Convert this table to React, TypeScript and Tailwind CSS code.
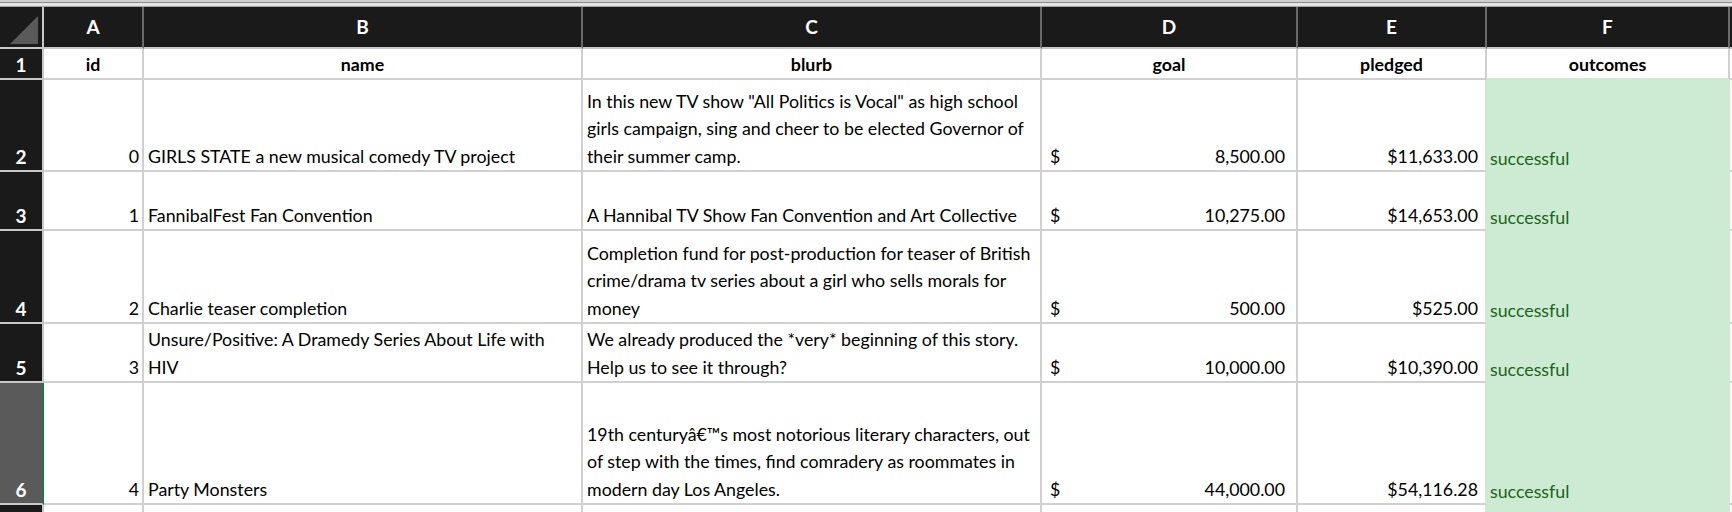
import React from 'react'

type Row = {
  n: number
  h: string
  id: string
  name: string[]
  blurb: string[]
  goal: string
  pledged: string
  selected?: boolean
}

const rows: Row[] = [
  {
    n: 2,
    h: 'h-[92px]',
    id: '0',
    name: ['GIRLS STATE a new musical comedy TV project'],
    blurb: [
      'In this new TV show "All Politics is Vocal" as high school',
      'girls campaign, sing and cheer to be elected Governor of',
      'their summer camp.',
    ],
    goal: '8,500.00',
    pledged: '$11,633.00',
  },
  {
    n: 3,
    h: 'h-[59px]',
    id: '1',
    name: ['FannibalFest Fan Convention'],
    blurb: ['A Hannibal TV Show Fan Convention and Art Collective'],
    goal: '10,275.00',
    pledged: '$14,653.00',
  },
  {
    n: 4,
    h: 'h-[93px]',
    id: '2',
    name: ['Charlie teaser completion'],
    blurb: [
      'Completion fund for post-production for teaser of British',
      'crime/drama tv series about a girl who sells morals for',
      'money',
    ],
    goal: '500.00',
    pledged: '$525.00',
  },
  {
    n: 5,
    h: 'h-[59px]',
    id: '3',
    name: ['Unsure/Positive: A Dramedy Series About Life with', 'HIV'],
    blurb: ['We already produced the *very* beginning of this story.', 'Help us to see it through?'],
    goal: '10,000.00',
    pledged: '$10,390.00',
  },
  {
    n: 6,
    h: 'h-[122px]',
    id: '4',
    name: ['Party Monsters'],
    blurb: [
      '19th centuryâ€™s most notorious literary characters, out',
      'of step with the times, find comradery as roommates in',
      'modern day Los Angeles.',
    ],
    goal: '44,000.00',
    pledged: '$54,116.28',
    selected: true,
  },
]

const cols = [
  { l: 'A', w: 'w-[100px]', label: 'id' },
  { l: 'B', w: 'w-[439px]', label: 'name' },
  { l: 'C', w: 'w-[459px]', label: 'blurb' },
  { l: 'D', w: 'w-[256px]', label: 'goal' },
  { l: 'E', w: 'w-[189px]', label: 'pledged' },
  { l: 'F', w: 'w-[243px]', label: 'outcomes' },
]

function Lines({ lines }: { lines: string[] }) {
  return (
    <div className="whitespace-nowrap">
      {lines.map((t, i) => (
        <div key={i}>{t}</div>
      ))}
    </div>
  )
}

function RowHead({ n, selected }: { n?: number; selected?: boolean }) {
  return (
    <div
      className={
        'w-[44px] shrink-0 flex items-end justify-center border-b-2 border-r-2 border-b-[#c8c8c8] text-[19px] font-bold text-white ' +
        (selected ? 'bg-[#5a5a5a] border-r-[#217346]' : 'bg-[#1a1a1a] border-r-[#c8c8c8]')
      }
    >
      {n}
    </div>
  )
}

export default function App() {
  return (
    <div
      className="w-[1732px] h-[512px] overflow-hidden bg-white text-[17.8px] leading-[27.5px] text-black"
      style={{ fontFamily: 'Lato, "Open Sans", sans-serif' }}
    >
      {/* window chrome strip */}
      <div className="h-[2px] bg-[#d0d0d0]" />
      <div className="h-[1px] bg-[#8c8c8c]" />
      <div className="h-[3px] bg-[#e4e4e4]" />
      <div className="h-[1px] bg-[#a0a0a0]" />

      {/* column letters */}
      <div className="flex h-[42px] bg-[#1a1a1a] text-white text-[19px] font-bold">
        <div className="relative w-[44px] shrink-0 border-b-2 border-r-2 border-[#c8c8c8]">
          <svg className="absolute left-[10px] top-[9px]" width="28" height="28" viewBox="0 0 28 28">
            <polygon points="0,28 28,28 28,0" fill="#5a5a5a" />
          </svg>
        </div>
        {cols.map((c) => (
          <div
            key={c.l}
            className={`${c.w} shrink-0 flex items-center justify-center border-b-2 border-r-2 border-b-[#c8c8c8] border-r-[#6a6a6a]`}
          >
            {c.l}
          </div>
        ))}
        <div className="flex-1 border-b-2 border-[#c8c8c8]" />
      </div>

      {/* header labels */}
      <div className="flex h-[31px]">
        <RowHead n={1} />
        {cols.map((c) => (
          <div
            key={c.l}
            className={
              `${c.w} shrink-0 flex items-end justify-center font-bold border-b-2 border-r-2 ` +
              (c.l === 'F' ? 'border-b-[#cdebd3] border-r-[#d0d0d0]' : 'border-[#d0d0d0]')
            }
          >
            {c.label}
          </div>
        ))}
        <div className="flex-1 border-b-2 border-[#d0d0d0]" />
      </div>

      {rows.map((r) => (
        <div key={r.n} className={`flex ${r.h}`}>
          <RowHead n={r.n} selected={r.selected} />
          <div className="w-[100px] shrink-0 flex items-end justify-end pr-[3px] border-b-2 border-r-2 border-[#d0d0d0]">
            {r.id}
          </div>
          <div className="w-[439px] shrink-0 flex items-end pl-[4px] border-b-2 border-r-2 border-[#d0d0d0]">
            <Lines lines={r.name} />
          </div>
          <div className="w-[459px] shrink-0 flex items-end pl-[4px] border-b-2 border-r-2 border-[#d0d0d0]">
            <Lines lines={r.blurb} />
          </div>
          <div className="w-[256px] shrink-0 flex items-end justify-between pl-[8px] pr-[11px] border-b-2 border-r-2 border-[#d0d0d0]">
            <span>$</span>
            <span>{r.goal}</span>
          </div>
          <div className="w-[189px] shrink-0 flex items-end justify-end pr-[7px] border-b-2 border-r-2 border-b-[#d0d0d0] border-r-[#cdebd3]">
            {r.pledged}
          </div>
          <div className="w-[243px] shrink-0 flex items-end pl-[3px] bg-[#cdebd3] text-[#1b6419]">successful</div>
          <div className="flex-1 border-b-2 border-[#d0d0d0]" />
        </div>
      ))}

      {/* next row, cut off */}
      <div className="flex h-[30px]">
        <RowHead />
        <div className="w-[100px] shrink-0 border-r-2 border-[#d0d0d0]" />
        <div className="w-[439px] shrink-0 border-r-2 border-[#d0d0d0]" />
        <div className="w-[459px] shrink-0 border-r-2 border-[#d0d0d0]" />
        <div className="w-[256px] shrink-0 border-r-2 border-[#d0d0d0]" />
        <div className="w-[189px] shrink-0 border-r-2 border-[#cdebd3]" />
        <div className="w-[243px] shrink-0 bg-[#cdebd3]" />
        <div className="flex-1" />
      </div>
    </div>
  )
}
